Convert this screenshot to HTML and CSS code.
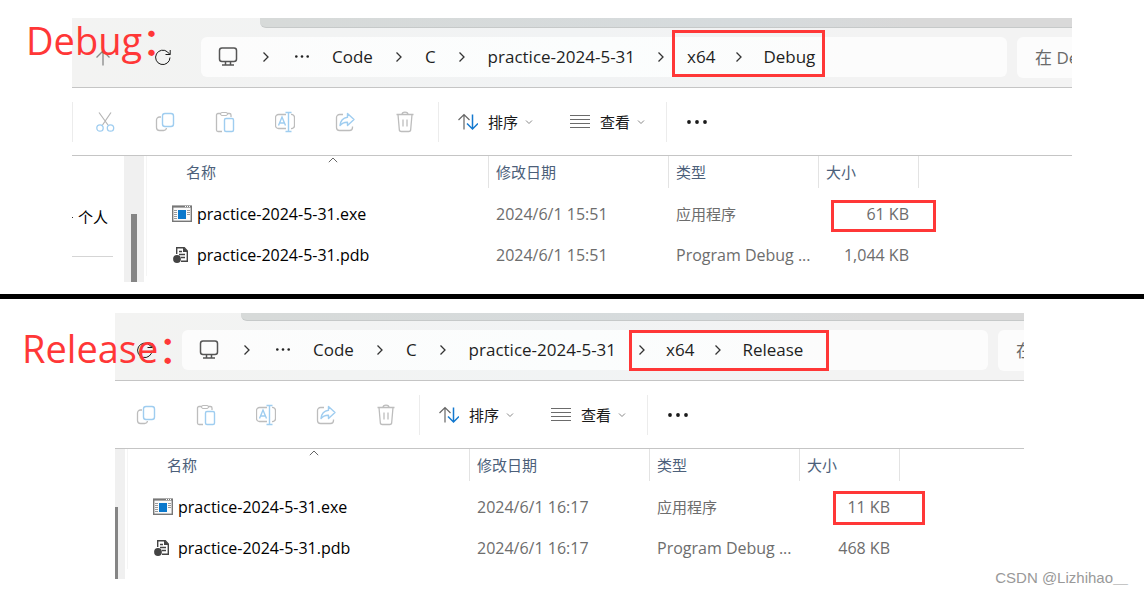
FILE: index.html
```html
<!DOCTYPE html>
<html lang="zh-CN">
  <head>
    <meta charset="UTF-8" />
    <meta name="viewport" content="width=device-width, initial-scale=1.0" />
    <title>Debug / Release</title>
    <link rel="stylesheet" href="styles.css">
  </head>
  <body>
    <!-- shared icons -->
    <svg class="defs" aria-hidden="true">
      <symbol id="up" viewBox="0 0 20 20"><path d="M10 17.500V3M3.500 9.500L10 3l6.500 6.500" stroke="#888" stroke-width="1.300" /></symbol>
      <symbol id="refresh" viewBox="0 0 20 20"><path d="M17 9.500A7.200 7.200 0 1 1 14.600 4L17 6.500M17.200 2V6.500H12.500" stroke="#1a1a1a" /></symbol>
      <symbol id="pc" viewBox="0 0 20 20"><rect x="1.500" y="1" width="17" height="13.500" rx="2.500" stroke="#555" stroke-width="1.500" /><path d="M7.500 14.500v3M12.500 14.500v3M4 18h12" stroke="#555" stroke-width="1.500" /></symbol>
      <symbol id="chev" viewBox="0 0 8 12"><path d="M1.500 1.500L6 6l-4.500 4.500" stroke="#333" stroke-width="1.300" /></symbol>
      <symbol id="dots" viewBox="0 0 16 4"><g fill="#222"><circle cx="2.300" cy="1.500" r="1.300" /><circle cx="8" cy="1.500" r="1.300" /><circle cx="13.700" cy="1.500" r="1.300" /></g></symbol>
      <symbol id="more" viewBox="0 0 20 4"><g fill="#1a1a1a"><circle cx="2" cy="2" r="1.900" /><circle cx="10" cy="2" r="1.900" /><circle cx="18" cy="2" r="1.900" /></g></symbol>
      <symbol id="down" viewBox="0 0 8 6"><path d="M1 1.500l3 3 3-3" stroke="#888" /></symbol>
      <symbol id="cut" viewBox="0 0 20 22"><path d="M4 1.500L13 14M16 1.500L7.500 14" stroke="#b5b5b5" stroke-width="1.200" /><circle cx="5" cy="17" r="3.200" stroke="#9fcdf0" stroke-width="1.300" /><circle cx="15.500" cy="17" r="3.200" stroke="#9fcdf0" stroke-width="1.300" /></symbol>
      <symbol id="copy" viewBox="0 0 20 22"><path d="M6 6H4.500a3 3 0 0 0-3 3v7.500a3 3 0 0 0 3 3h4a3 3 0 0 0 3-2.500" stroke="#bdbdbd" stroke-width="1.300" /><rect x="7.500" y="2.500" width="11" height="13" rx="2.500" stroke="#9fcdf0" stroke-width="1.400" /></symbol>
      <symbol id="paste" viewBox="0 0 20 22"><path d="M6 2.500H3a1.500 1.500 0 0 0-1.500 1.500v15A1.500 1.500 0 0 0 3 20.500h4M12 2.500h2.500A1.500 1.500 0 0 1 16 4v2" stroke="#bdbdbd" stroke-width="1.300" /><rect x="5.500" y="1.500" width="7" height="3" rx="1.500" stroke="#bdbdbd" /><rect x="9.500" y="7.500" width="9" height="13" rx="1.500" stroke="#9fcdf0" stroke-width="1.400" /></symbol>
      <symbol id="rename" viewBox="0 0 20 22"><path d="M11 3.500H3.500a3 3 0 0 0-3 3v8a3 3 0 0 0 3 3H11M16 3.500a3 3 0 0 1 3.500 3v8a3 3 0 0 1-3.500 3" stroke="#bdbdbd" stroke-width="1.300" /><path d="M3.500 14.500l3.500-8.500 3.500 8.500M4.700 12h4.600M13.500 1.500v19M10.500 1.500h6M10.500 20.500h6" stroke="#9fcdf0" stroke-width="1.400" /></symbol>
      <symbol id="share" viewBox="0 0 20 22"><path d="M8 3.500H4.500a3 3 0 0 0-3 3v10a3 3 0 0 0 3 3h10a3 3 0 0 0 3-3v-1" stroke="#bdbdbd" stroke-width="1.300" /><path d="M12.500 2.500l6.500 6-6.500 6v-3.300c-3.500-.2-5.500.8-7.500 3.300.5-5 3.500-7.800 7.500-8.300z" stroke="#9fcdf0" stroke-width="1.400" stroke-linejoin="round" /></symbol>
      <symbol id="bin" viewBox="0 0 20 22"><path d="M1.500 3.500h17M7 3.500a3 2.300 0 0 1 6 0M3 3.500l1.300 15a2 2 0 0 0 2 2h7.400a2 2 0 0 0 2-2L17 3.500M8 8.500v7M12 8.500v7" stroke="#bdbdbd" stroke-width="1.300" /></symbol>
      <symbol id="sort" viewBox="0 0 20 22"><path d="M6 18.500V3.500M.5 9L6 3.500 11.500 9" stroke="#666" stroke-width="1.200" /><path d="M14.500 3.500V18M9 12.500l5.500 5.500 5.500-5.500" stroke="#1479cf" stroke-width="1.500" /></symbol>
      <symbol id="view" viewBox="0 0 20 22"><path d="M0 4.500h20M0 8.500h20M0 12.500h20M0 16.500h20" stroke="#6b6b6b" stroke-width="1.200" /></symbol>
      <symbol id="asc" viewBox="0 0 10 6"><path d="M.8 5.200L5 1l4.200 4.200" stroke="#666" /></symbol>
      <symbol id="exe" viewBox="0 0 20 18"><rect x=".7" y="1.500" width="18.600" height="14.800" fill="#fafafa" stroke="#777" stroke-width="1.400" /><path d="M0 1.500h20" stroke="#777" stroke-width="2" /><path d="M13 1.500h1M15 1.500h1M17 1.500h1" stroke="#fff" /><path d="M2 5.500h3M2 7.500h3M2 9.500h3M2 11.500h3M2 13.500h3M15 5.500h3M15 7.500h3M15 9.500h3" stroke="#999" /><rect x="6" y="5" width="8" height="9" fill="#0a78cc" /></symbol>
      <symbol id="pdb" viewBox="0 0 20 18"><path d="M4.700 8V1.700h7.600L15.300 5v10.300H9" fill="#fff" stroke="#444" stroke-width="1.400" /><path d="M11 1v5h5z" fill="#444" /><path d="M7 5.500h3M7 8.500h6M9 11.500h4" stroke="#444" stroke-width="1.400" /><circle cx="5" cy="13" r="3.900" fill="#444" /></symbol>
    </svg>

    <section class="build debug">
      <h2 class="label">Debug：</h2>
      <div class="explorer">
        <div class="header">
          <div class="tabs"></div>
          <div class="bar">
            <div class="nav">
              <button aria-label="上移"><svg class="i20"><use href="#up" /></svg></button>
              <button aria-label="刷新"><svg class="i20"><use href="#refresh" /></svg></button>
            </div>
            <nav class="address">
              <svg class="i20"><use href="#pc" /></svg>
              <svg class="chev wide"><use href="#chev" /></svg>
              <svg class="dots"><use href="#dots" /></svg>
              <a href="#">Code</a>
              <svg class="chev"><use href="#chev" /></svg>
              <a href="#">C</a>
              <svg class="chev"><use href="#chev" /></svg>
              <a href="#">practice-2024-5-31</a>
              <svg class="chev"><use href="#chev" /></svg>
              <span class="mark">
                <a href="#">x64</a>
                <svg class="chev"><use href="#chev" /></svg>
                <a href="#">Debug</a>
              </span>
            </nav>
            <input class="search" type="text" placeholder="在 Debug 中搜索" aria-label="搜索" />
          </div>
        </div>
        <div class="toolbar">
          <button class="tool" aria-label="剪切"><svg><use href="#cut" /></svg></button>
          <button class="tool" aria-label="复制"><svg><use href="#copy" /></svg></button>
          <button class="tool" aria-label="粘贴"><svg><use href="#paste" /></svg></button>
          <button class="tool" aria-label="重命名"><svg><use href="#rename" /></svg></button>
          <button class="tool" aria-label="共享"><svg><use href="#share" /></svg></button>
          <button class="tool" aria-label="删除"><svg><use href="#bin" /></svg></button>
          <div class="sep"></div>
          <button class="menu"><svg><use href="#sort" /></svg>排序<svg class="down"><use href="#down" /></svg></button>
          <button class="menu"><svg><use href="#view" /></svg>查看<svg class="down"><use href="#down" /></svg></button>
          <div class="sep"></div>
          <button class="more" aria-label="更多"><svg><use href="#more" /></svg></button>
        </div>
        <div class="content">
          <div class="side"><p>个人</p></div>
          <div class="scroll"><div class="thumb"></div></div>
          <table>
            <thead>
              <tr>
                <th class="name">名称<svg class="asc"><use href="#asc" /></svg></th>
                <th class="date">修改日期</th>
                <th class="type">类型</th>
                <th class="size">大小</th>
              </tr>
            </thead>
            <tbody>
              <tr>
                <td><div class="file"><svg><use href="#exe" /></svg>practice-2024-5-31.exe</div></td>
                <td>2024/6/1 15:51</td>
                <td class="zh">应用程序</td>
                <td class="mark">61 KB</td>
              </tr>
              <tr>
                <td><div class="file"><svg><use href="#pdb" /></svg>practice-2024-5-31.pdb</div></td>
                <td>2024/6/1 15:51</td>
                <td>Program Debug ...</td>
                <td>1,044 KB</td>
              </tr>
            </tbody>
          </table>
        </div>
      </div>
    </section>

    <hr />

    <section class="build release">
      <h2 class="label">Release：</h2>
      <div class="explorer">
        <div class="header">
          <div class="tabs"></div>
          <div class="bar">
            <div class="nav">
              <button aria-label="刷新"><svg class="i20"><use href="#refresh" /></svg></button>
            </div>
            <nav class="address">
              <svg class="i20"><use href="#pc" /></svg>
              <svg class="chev wide"><use href="#chev" /></svg>
              <svg class="dots"><use href="#dots" /></svg>
              <a href="#">Code</a>
              <svg class="chev"><use href="#chev" /></svg>
              <a href="#">C</a>
              <svg class="chev"><use href="#chev" /></svg>
              <a href="#">practice-2024-5-31</a>
              <span class="mark">
                <svg class="chev"><use href="#chev" /></svg>
                <a href="#">x64</a>
                <svg class="chev"><use href="#chev" /></svg>
                <a href="#">Release</a>
              </span>
            </nav>
            <input class="search" type="text" placeholder="在 Release 中搜索" aria-label="搜索" />
          </div>
        </div>
        <div class="toolbar">
          <button class="tool" aria-label="复制"><svg><use href="#copy" /></svg></button>
          <button class="tool" aria-label="粘贴"><svg><use href="#paste" /></svg></button>
          <button class="tool" aria-label="重命名"><svg><use href="#rename" /></svg></button>
          <button class="tool" aria-label="共享"><svg><use href="#share" /></svg></button>
          <button class="tool" aria-label="删除"><svg><use href="#bin" /></svg></button>
          <div class="sep"></div>
          <button class="menu"><svg><use href="#sort" /></svg>排序<svg class="down"><use href="#down" /></svg></button>
          <button class="menu"><svg><use href="#view" /></svg>查看<svg class="down"><use href="#down" /></svg></button>
          <div class="sep"></div>
          <button class="more" aria-label="更多"><svg><use href="#more" /></svg></button>
        </div>
        <div class="content">
          <div class="scroll"><div class="thumb"></div></div>
          <table>
            <thead>
              <tr>
                <th class="name">名称<svg class="asc"><use href="#asc" /></svg></th>
                <th class="date">修改日期</th>
                <th class="type">类型</th>
                <th class="size">大小</th>
              </tr>
            </thead>
            <tbody>
              <tr>
                <td><div class="file"><svg><use href="#exe" /></svg>practice-2024-5-31.exe</div></td>
                <td>2024/6/1 16:17</td>
                <td class="zh">应用程序</td>
                <td class="mark">11 KB</td>
              </tr>
              <tr>
                <td><div class="file"><svg><use href="#pdb" /></svg>practice-2024-5-31.pdb</div></td>
                <td>2024/6/1 16:17</td>
                <td>Program Debug ...</td>
                <td>468 KB</td>
              </tr>
            </tbody>
          </table>
        </div>
      </div>
    </section>

    <div class="watermark">CSDN @Lizhihao＿</div>
  </body>
</html>
```
FILE: styles.css
```css
* {
  box-sizing: border-box;
}

body {
  margin: 0;
  background: #fff;
  font-family: "Open Sans", "Noto Sans CJK SC", sans-serif;
  font-size: 15px;
  color: #000;
}

svg {
  fill: none;
  flex: none;
  width: 20px;
  height: 22px;
}

.defs {
  position: absolute;
  width: 0;
  height: 0;
}

button {
  display: flex;
  align-items: center;
  padding: 0;
  border: 0;
  background: none;
  font: inherit;
  color: #1a1a1a;
}

a {
  color: #1f1f1f;
  text-decoration: none;
}

.build {
  position: relative;
}

.debug {
  padding: 18px 72px 12px;
}

.release {
  padding: 14px 120px 16px 115px;
}

hr {
  height: 5px;
  margin: 0;
  border: 0;
  background: #000;
}

.label {
  position: absolute;
  z-index: 1;
  left: 26px;
  top: 12px;
  margin: 0;
  font-size: 38px;
  line-height: 56px;
  font-weight: 500;
  color: #ff3737;
}

.release .label {
  left: 22px;
  top: 21px;
}

/* address bar */
.header {
  border-bottom: 1px solid #c5c5c5;
  background: linear-gradient(90deg, #f3f3f2, #f1f3f4 50%, #f3f3f3 80%);
}

.tabs {
  height: 10px;
  margin-left: 188px;
  border-bottom: 1px solid #c6c9c9;
  border-bottom-left-radius: 6px;
  background: linear-gradient(90deg, #d7dad9, #d6dbdd 60%, #d9d9d9 80%);
}

.release .tabs {
  height: 8px;
  margin-left: 126px;
}

.bar {
  display: flex;
  padding: 9px 0;
}

.nav {
  display: flex;
  justify-content: flex-end;
  width: 129px;
  padding-right: 8px;
}

.release .nav {
  width: 67px;
}

.nav button {
  width: 60px;
  justify-content: center;
}

.i20 {
  height: 20px;
}

.address {
  flex: 1;
  display: flex;
  align-items: center;
  gap: 22px;
  height: 40px;
  padding-left: 17px;
  margin-right: 10px;
  border-radius: 6px;
  background: linear-gradient(90deg, #fcfcfc, #fbfdfd 50%, #fcfcfc 80%);
  font-size: 17px;
  white-space: nowrap;
}

.address a {
  padding-bottom: 2px;
}

.address .mark {
  display: flex;
  align-items: center;
  align-self: stretch;
  gap: 20px;
}

.chev {
  width: 8px;
  height: 12px;
}

.wide {
  margin: 0 2px;
}

.dots {
  width: 16px;
  height: 4px;
}

.search {
  width: 55px;
  height: 41px;
  padding: 0 0 0 18px;
  border: 0;
  border-radius: 6px 0 0 6px;
  background: #fcfcfc;
  font: inherit;
  font-size: 17px;
}

.release .search {
  width: 26px;
}

.search::placeholder {
  color: #6a6a6a;
}

/* red highlight boxes */
.mark {
  position: relative;
}

.mark::after {
  content: "";
  position: absolute;
  border: 3px solid #ff3737;
}

.debug .address .mark::after {
  inset: -7px -10px 0 -15px;
}

.release .address .mark::after {
  inset: 0 -26px -1px -9px;
}

.debug td.mark::after {
  inset: 6px -17px 3px 12px;
}

.release td.mark::after {
  inset: 4px -25px 3px 33px;
}

/* toolbar */
.toolbar {
  display: flex;
  align-items: center;
  height: 68px;
  padding-left: 2px;
  border-bottom: 1px solid #c5c5c5;
}

.debug .toolbar::before {
  content: "";
  width: 1px;
  height: 40px;
  margin-left: -2px;
  margin-right: 2px;
  background: #ececec;
}

.release .toolbar {
  padding-left: 1px;
}

.tool {
  justify-content: center;
  width: 60px;
  height: 40px;
}

.sep {
  width: 1px;
  height: 40px;
  margin-left: 3px;
  background: #ececec;
}

.menu {
  gap: 10px;
  height: 40px;
  padding: 0 18px 0 19px;
}

.menu .down {
  width: 8px;
  height: 6px;
  margin-left: -3px;
}

.more {
  height: 40px;
  padding: 0 20px;
}

.more svg {
  height: 4px;
}

/* file list */
.content {
  display: flex;
  height: 126px;
}

.release .content {
  height: 130px;
}

.side {
  width: 52px;
}

.side p {
  display: flex;
  gap: 5px;
  width: 41px;
  height: 101px;
  margin: 0;
  padding-top: 50px;
  border-bottom: 1px solid #d5d5d5;
  line-height: 22px;
  white-space: nowrap;
}

/* end of the cut-off account name */
.side p::before {
  content: "";
  width: 1px;
  height: 1px;
  margin-top: 11px;
  background: #333;
}

.scroll {
  width: 20px;
  margin-right: 2px;
  padding: 58px 7px 0;
  background: #f0f0f0;
}

.release .scroll {
  width: 10px;
  padding: 58px 7px 0 0;
}

.thumb {
  height: 100%;
  background: #858585;
}

table {
  table-layout: fixed;
  align-self: flex-start;
  width: 773px;
  border-collapse: separate;
  border-spacing: 0;
  box-shadow: inset 1px 0 #f5f5f5;
}

th {
  position: relative;
  height: 32px;
  padding: 0 0 0 7px;
  border-right: 1px solid #e3e3e3;
  text-align: left;
  font-size: 15px;
  font-weight: 400;
  line-height: 22px;
  color: #4c607a;
}

.name {
  width: 343px;
  padding-left: 40px;
}

.date {
  width: 180px;
}

.type {
  width: 150px;
}

.size {
  width: 100px;
}

.asc {
  position: absolute;
  top: 1px;
  left: 182px;
  width: 10px;
  height: 6px;
}

tbody::before {
  content: "";
  display: block;
  height: 6px;
}

td {
  height: 41px;
  padding: 0 0 2px 7px;
  font-size: 16px;
  line-height: 22px;
  white-space: nowrap;
  color: #6d6d6d;
}

.zh {
  font-size: 15px;
}

td:first-child {
  padding-left: 26px;
}

td:last-child {
  padding-right: 10px;
  text-align: right;
}

.file {
  display: flex;
  align-items: center;
  gap: 5px;
  color: #000;
}

.file svg {
  height: 18px;
}

.watermark {
  position: absolute;
  right: 16px;
  bottom: 8px;
  font-family: "Liberation Sans", "Noto Sans CJK SC", sans-serif;
  font-size: 15px;
  line-height: 20px;
  color: #999;
}
```
